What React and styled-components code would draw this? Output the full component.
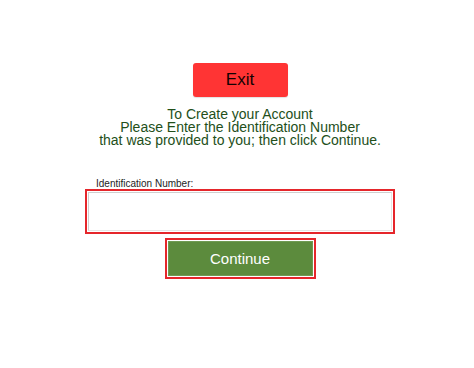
import React from "react";
import styled, { createGlobalStyle } from "styled-components";

const Global = createGlobalStyle`
  html, body { margin: 0; padding: 0; background: #ffffff; }
  body { font-family: "Liberation Sans", Arial, sans-serif; }
`;

const Page = styled.main`
  width: 474px;
  min-height: 368px;
  box-sizing: border-box;
  padding: 63px 0 0 6px;
  display: flex;
  flex-direction: column;
  align-items: center;
`;

const ExitButton = styled.button`
  width: 95px;
  height: 34px;
  border: none;
  border-radius: 3px;
  background: #ff3434;
  color: #140202;
  font-family: "Liberation Sans", Arial, sans-serif;
  font-size: 17px;
  padding: 0;
  cursor: pointer;
  box-shadow: 0 1px 1px rgba(0, 0, 0, 0.12);
`;

const Instructions = styled.p`
  margin: 11px 0 0;
  font-size: 14px;
  line-height: 13px;
  color: #234f1a;
  text-align: center;
`;

const Form = styled.form`
  margin-top: 31px;
  width: 310px;
  display: flex;
  flex-direction: column;
  align-items: center;
`;

const Label = styled.label`
  align-self: stretch;
  display: block;
  height: 11px;
  padding-left: 11px;
  font-size: 10px;
  line-height: 11px;
  color: #1d1d1d;
`;

const Frame = styled.div`
  box-sizing: border-box;
  width: ${(p) => p.$w}px;
  height: ${(p) => p.$h}px;
  border: 2px solid #e5262b;
  padding: 1px;
  background: #ffffff;
  margin-top: ${(p) => p.$mt || 0}px;
  display: flex;
`;

const Input = styled.input`
  box-sizing: border-box;
  flex: 1;
  border: 1px solid #cfcfcf;
  border-right-color: #e6e6e6;
  border-bottom-color: #e6e6e6;
  outline: none;
  padding: 0 6px;
  font-family: "Liberation Sans", Arial, sans-serif;
  font-size: 14px;
`;

const ContinueButton = styled.button`
  flex: 1;
  border: 1px solid #6f9a52;
  background: #5c8b3d;
  color: #ffffff;
  font-family: "Liberation Sans", Arial, sans-serif;
  font-size: 15px;
  padding: 0;
  cursor: pointer;
`;

export default function App() {
  return (
    <>
      <Global />
      <Page>
        <ExitButton type="button">Exit</ExitButton>
        <Instructions>
          To Create your Account
          <br />
          Please Enter the Identification Number
          <br />
          that was provided to you; then click Continue.
        </Instructions>
        <Form onSubmit={(e) => e.preventDefault()}>
          <Label htmlFor="idnum">Identification Number:</Label>
          <Frame $w={310} $h={45}>
            <Input id="idnum" type="text" />
          </Frame>
          <Frame $w={151} $h={41} $mt={4}>
            <ContinueButton type="submit">Continue</ContinueButton>
          </Frame>
        </Form>
      </Page>
    </>
  );
}
